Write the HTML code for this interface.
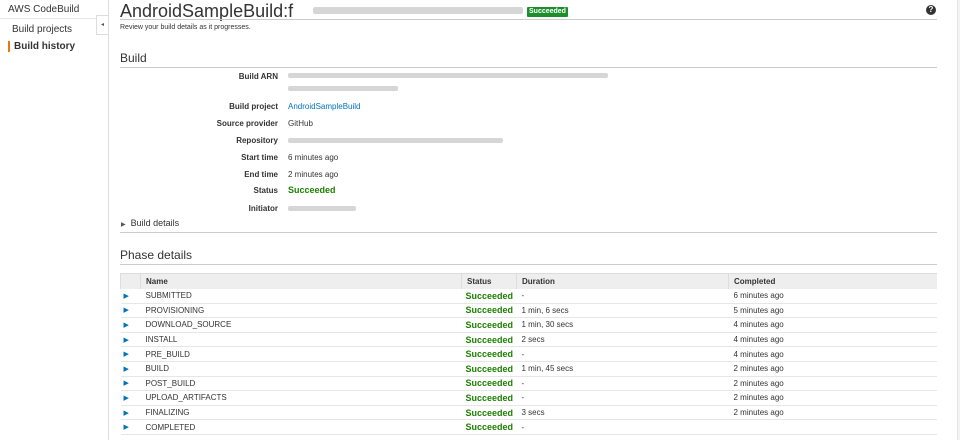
<!DOCTYPE html>
<html><head><style>
body{margin:0;width:960px;height:440px;background:#fff;font-family:"Liberation Sans",sans-serif;color:#333;position:relative;overflow:hidden}
.a{position:absolute;white-space:nowrap}
.blur{position:absolute;height:5px;background:#d6d6d6;border-radius:2px}
.lab{position:absolute;right:682px;font-size:8px;font-weight:bold;color:#333}
.val{position:absolute;left:288px;font-size:8px;color:#333}
table{position:absolute;left:120px;top:273px;width:817px;border-collapse:collapse;font-size:8px;table-layout:fixed}
th{background:#eee;text-align:left;font-weight:bold;height:15px;padding:0 0 0 5px;border-left:1px solid #ddd;border-top:1px solid #ddd}
td{height:13.6px;padding:0 0 0 5px;border-bottom:1px solid #e6e6e6;white-space:nowrap}
td.s{color:#1d8102;font-weight:bold;font-size:9px;padding-left:4px}
td.t{color:#0073bb;font-size:7px;padding-left:3px}
</style></head><body>
<div class="a" style="left:8px;top:4px;font-size:10px">AWS CodeBuild</div>
<div style="position:absolute;left:0;top:18px;width:96px;border-top:1px solid #e5e5e5"></div>
<div class="a" style="left:12px;top:24px;font-size:10px">Build projects</div>
<div style="position:absolute;left:8px;top:41px;width:2px;height:11px;background:#e47911"></div>
<div class="a" style="left:14px;top:41px;font-size:10px;font-weight:bold">Build history</div>
<div style="position:absolute;left:96px;top:15px;width:11px;height:18px;border:1px solid #ddd;border-right:none;background:#fff;font-size:6px;text-align:center;line-height:18px;color:#555">◂</div>
<div style="position:absolute;left:108px;top:0;height:440px;border-left:1px solid #ddd"></div>
<div style="position:absolute;left:957px;top:0;height:440px;width:3px;background:#f2f2f2;border-left:1px solid #e5e5e5"></div>
<div class="a" style="left:120px;top:1px;font-size:18px;color:#333">AndroidSampleBuild:f</div>
<div class="blur" style="left:313px;top:7px;width:210px;height:7px"></div>
<div class="a" style="left:527px;top:7px;font-size:7px;font-weight:bold;color:#fff;background:#1d8e2c;padding:0 2px;line-height:10px;border-radius:1px">Succeeded</div>
<div class="a" style="left:926px;top:5px;width:10px;height:10px;border-radius:50%;background:#333;color:#fff;font-size:8px;font-weight:bold;text-align:center;line-height:10px">?</div>
<div style="position:absolute;left:120px;top:19px;width:817px;border-top:1px solid #ccc"></div>
<div class="a" style="left:120px;top:24px;font-size:7px">Review your build details as it progresses.</div>
<div class="a" style="left:120px;top:51px;font-size:12px">Build</div>
<div style="position:absolute;left:120px;top:67px;width:817px;border-top:1px solid #ccc"></div>
<div class="lab" style="top:72px">Build ARN</div>
<div class="blur" style="left:288px;top:73px;width:320px"></div>
<div class="blur" style="left:288px;top:86px;width:110px"></div>
<div class="lab" style="top:102px">Build project</div><div class="val" style="top:102px;color:#0073bb">AndroidSampleBuild</div>
<div class="lab" style="top:119px">Source provider</div><div class="val" style="top:119px">GitHub</div>
<div class="lab" style="top:136px">Repository</div><div class="blur" style="left:288px;top:138px;width:215px"></div>
<div class="lab" style="top:153px">Start time</div><div class="val" style="top:153px">6 minutes ago</div>
<div class="lab" style="top:170px">End time</div><div class="val" style="top:170px">2 minutes ago</div>
<div class="lab" style="top:186px">Status</div><div class="val" style="top:185px;color:#1d8102;font-weight:bold;font-size:9px">Succeeded</div>
<div class="lab" style="top:204px">Initiator</div><div class="blur" style="left:288px;top:206px;width:68px"></div>
<div class="a" style="left:121px;top:218px;font-size:9px"><span style="font-size:6px;color:#555">▶</span>&nbsp; Build details</div>
<div style="position:absolute;left:120px;top:232px;width:817px;border-top:1px solid #ccc"></div>
<div class="a" style="left:120px;top:248px;font-size:12px">Phase details</div>
<div style="position:absolute;left:120px;top:264px;width:817px;border-top:1px solid #ccc"></div>
<table>
<colgroup><col style="width:20px"><col style="width:321px"><col style="width:55px"><col style="width:212px"><col></colgroup>
<tr><th></th><th>Name</th><th>Status</th><th>Duration</th><th>Completed</th></tr>
<tr><td class="t">▶</td><td>SUBMITTED</td><td class="s">Succeeded</td><td>-</td><td>6 minutes ago</td></tr>
<tr><td class="t">▶</td><td>PROVISIONING</td><td class="s">Succeeded</td><td>1 min, 6 secs</td><td>5 minutes ago</td></tr>
<tr><td class="t">▶</td><td>DOWNLOAD_SOURCE</td><td class="s">Succeeded</td><td>1 min, 30 secs</td><td>4 minutes ago</td></tr>
<tr><td class="t">▶</td><td>INSTALL</td><td class="s">Succeeded</td><td>2 secs</td><td>4 minutes ago</td></tr>
<tr><td class="t">▶</td><td>PRE_BUILD</td><td class="s">Succeeded</td><td>-</td><td>4 minutes ago</td></tr>
<tr><td class="t">▶</td><td>BUILD</td><td class="s">Succeeded</td><td>1 min, 45 secs</td><td>2 minutes ago</td></tr>
<tr><td class="t">▶</td><td>POST_BUILD</td><td class="s">Succeeded</td><td>-</td><td>2 minutes ago</td></tr>
<tr><td class="t">▶</td><td>UPLOAD_ARTIFACTS</td><td class="s">Succeeded</td><td>-</td><td>2 minutes ago</td></tr>
<tr><td class="t">▶</td><td>FINALIZING</td><td class="s">Succeeded</td><td>3 secs</td><td>2 minutes ago</td></tr>
<tr><td class="t">▶</td><td>COMPLETED</td><td class="s">Succeeded</td><td>-</td><td></td></tr>
</table>
</body></html>
